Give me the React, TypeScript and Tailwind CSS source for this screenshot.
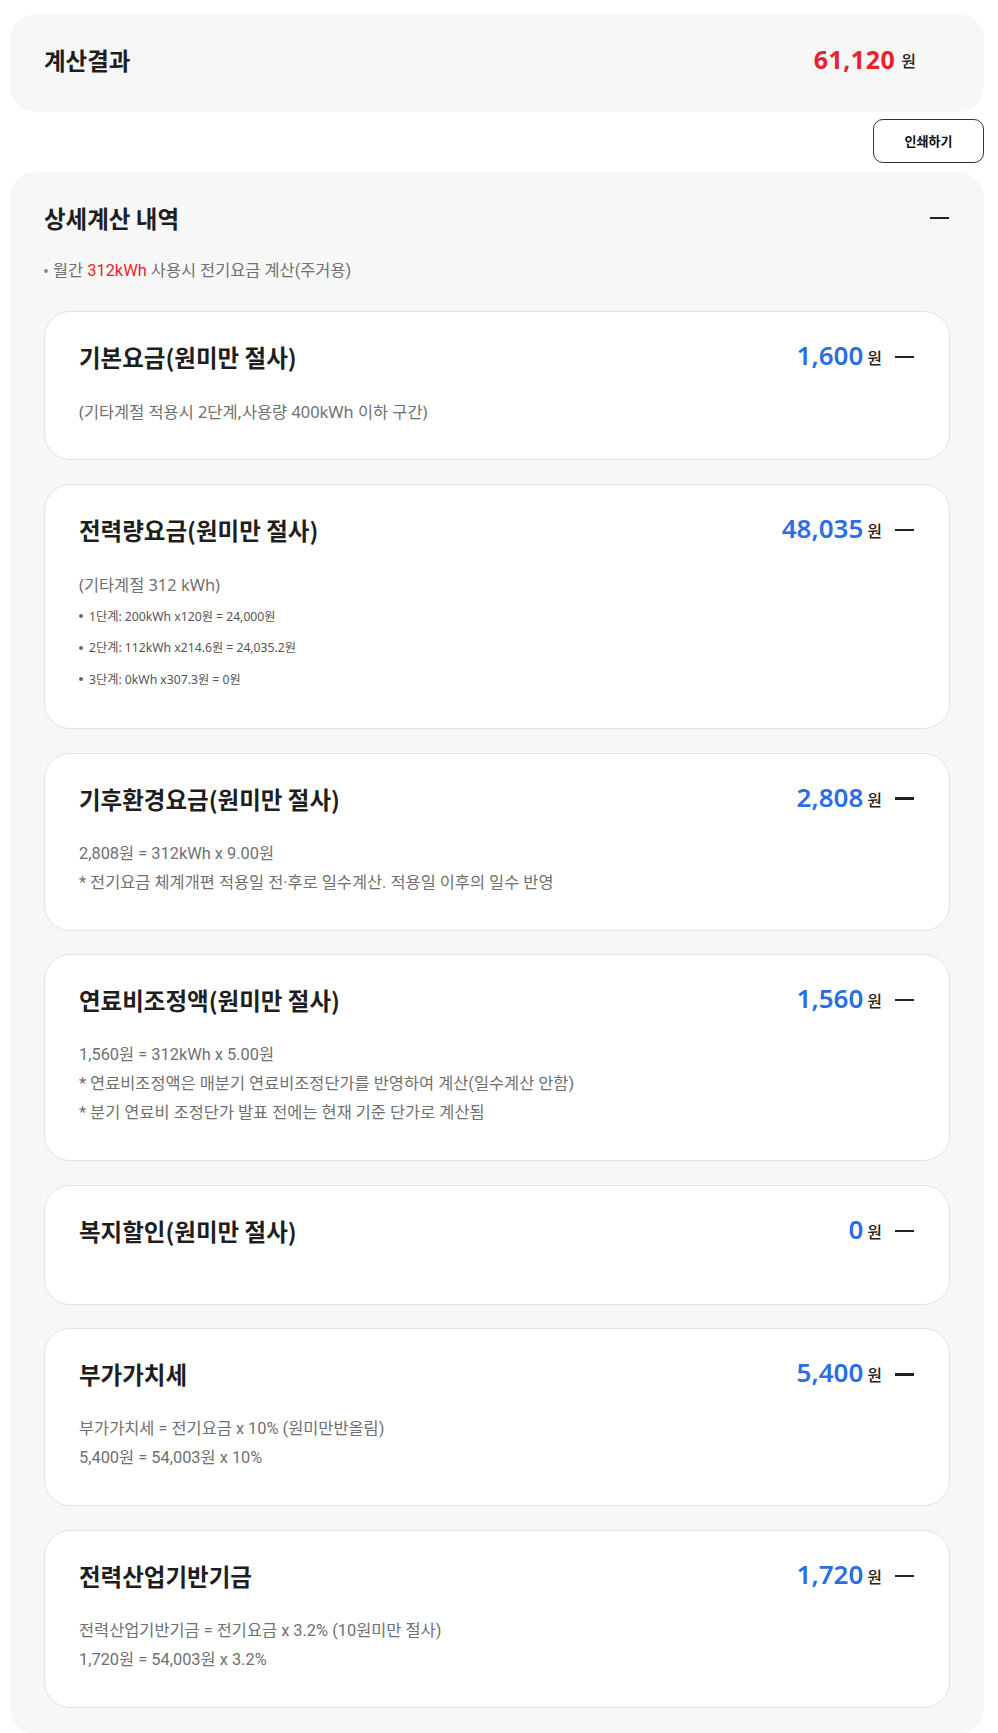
import React from "react";

interface FeeItem {
  title: string;
  amount: string;
  lines: string[];
  bullets?: string[];
  noto?: boolean;
  thick?: boolean;
}

const ITEMS: FeeItem[] = [
  {
    title: "기본요금(원미만 절사)",
    amount: "1,600",
    lines: ["(기타계절 적용시 2단계,사용량 400kWh 이하 구간)"],
    noto: true,
  },
  {
    title: "전력량요금(원미만 절사)",
    amount: "48,035",
    lines: ["(기타계절 312 kWh)"],
    bullets: [
      "1단계: 200kWh x120원 = 24,000원",
      "2단계: 112kWh x214.6원 = 24,035.2원",
      "3단계: 0kWh x307.3원 = 0원",
    ],
    noto: true,
  },
  {
    title: "기후환경요금(원미만 절사)",
    amount: "2,808",
    lines: [
      "2,808원 = 312kWh x 9.00원",
      "* 전기요금 체계개편 적용일 전·후로 일수계산. 적용일 이후의 일수 반영",
    ],
    thick: true,
  },
  {
    title: "연료비조정액(원미만 절사)",
    amount: "1,560",
    lines: [
      "1,560원 = 312kWh x 5.00원",
      "* 연료비조정액은 매분기 연료비조정단가를 반영하여 계산(일수계산 안함)",
      "* 분기 연료비 조정단가 발표 전에는 현재 기준 단가로 계산됨",
    ],
  },
  { title: "복지할인(원미만 절사)", amount: "0", lines: [] },
  {
    title: "부가가치세",
    amount: "5,400",
    lines: ["부가가치세 = 전기요금 x 10% (원미만반올림)", "5,400원 = 54,003원 x 10%"],
    thick: true,
  },
  {
    title: "전력산업기반기금",
    amount: "1,720",
    lines: ["전력산업기반기금 = 전기요금 x 3.2% (10원미만 절사)", "1,720원 = 54,003원 x 3.2%"],
  },
];

function FeeCard({ item }: { item: FeeItem }) {
  return (
    <div className="bg-white border border-[#e2e3e8] rounded-[26px] pt-[29px] pb-[33px] pl-[34px] pr-[35px]">
      {/* Header */}
      <div className="flex items-start justify-between mb-[24px]">
        <h3 className="text-[23.5px] leading-[32px] font-bold text-[#1e1e1e] font-['Noto_Sans_CJK_KR',sans-serif]">
          {item.title}
        </h3>
        <div className="flex items-center h-[32px] -mt-[2px]">
          <span className="text-[26px] leading-none font-semibold text-[#2b6ee4] font-['Noto_Sans',sans-serif]">
            {item.amount}
          </span>
          <span className="ml-[4px] mt-[4px] text-[16px] leading-none font-medium text-[#222] font-['Noto_Sans_CJK_KR',sans-serif]">
            원
          </span>
          <span
            className={`ml-[13px] mt-[4px] w-[19px] bg-[#222] ${item.thick ? "h-[3px]" : "h-[2px]"}`}
          />
        </div>
      </div>

      {/* Description */}
      <div
        className={`text-[16.4px] leading-[29px] text-[#707070] ${
          item.noto
            ? "font-['Noto_Sans','Noto_Sans_CJK_KR',sans-serif]"
            : "font-['Roboto','Noto_Sans_CJK_KR',sans-serif]"
        }`}
      >
        {item.lines.map((line) => (
          <p key={line}>{line}</p>
        ))}
      </div>

      {item.bullets && (
        <ul className="mt-[2px] text-[12.2px] leading-[31.5px] text-[#555] font-['Noto_Sans','Noto_Sans_CJK_KR',sans-serif]">
          {item.bullets.map((b) => (
            <li key={b} className="flex items-center">
              <span className="w-[4px] h-[4px] rounded-full bg-[#666] mr-[6px]" />
              {b}
            </li>
          ))}
        </ul>
      )}
    </div>
  );
}

export default function App() {
  return (
    <div className="bg-white min-h-[1733px] pl-[10px] pr-[14px] pt-[14px] font-['Noto_Sans_CJK_KR',sans-serif]">
      {/* Result summary */}
      <div className="bg-[#f7f7f7] rounded-[26px] h-[98px] pl-[34px] pr-[68px] flex items-center justify-between">
        <h1 className="text-[23.5px] leading-[32px] font-bold text-[#1e1e1e] -mt-[6px]">계산결과</h1>
        <div className="flex items-center -mt-[8px]">
          <span className="text-[25px] leading-none font-bold text-[#e8212b] tracking-[0.5px] font-['Noto_Sans',sans-serif]">
            61,120
          </span>
          <span className="ml-[6px] mt-[2px] text-[16px] leading-none font-medium text-[#222]">원</span>
        </div>
      </div>

      {/* Print */}
      <div className="flex justify-end mt-[7px]">
        <button className="w-[111px] h-[44px] border border-[#333] rounded-[10px] bg-white text-[13px] font-semibold text-[#111]">
          인쇄하기
        </button>
      </div>

      {/* Detail */}
      <div className="mt-[9px] bg-[#f7f7f7] rounded-[26px] pt-[30px] pb-[26px] px-[34px]">
        <div className="flex items-center justify-between">
          <h2 className="text-[23.5px] leading-[32px] font-bold text-[#1e1e1e]">상세계산 내역</h2>
          <span className="w-[19px] h-[2px] bg-[#222] mr-[1px]" />
        </div>
        <p className="mt-[25px] text-[16.4px] leading-[24px] text-[#707070] font-['Roboto','Noto_Sans_CJK_KR',sans-serif] flex items-center">
          <span className="w-[4px] h-[4px] rounded-full bg-[#888] mr-[5px]" />
          월간&nbsp;<span className="text-[#e8212b]">312kWh</span>&nbsp;사용시 전기요금 계산(주거용)
        </p>

        <div className="mt-[28px] flex flex-col gap-[23.5px]">
          {ITEMS.map((item) => (
            <FeeCard key={item.title} item={item} />
          ))}
        </div>
      </div>
    </div>
  );
}
